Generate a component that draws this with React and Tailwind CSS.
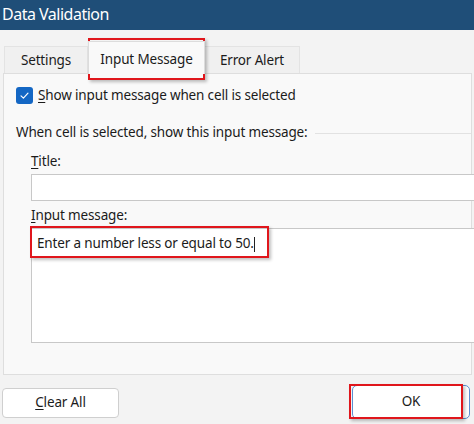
import React from "react";

const font = { fontFamily: '"Noto Sans", "Open Sans", sans-serif' };

function U({ children }) {
  return <span className="underline underline-offset-2 decoration-1">{children}</span>;
}

export default function App() {
  return (
    <div
      className="relative w-[474px] h-[424px] overflow-hidden bg-[#f3f3f3] text-[#1b1b1b] text-[13.5px] leading-none tracking-[-0.15px]"
      style={font}
    >
      {/* Title bar */}
      <div className="h-[30px] bg-[#1f4e78] text-white text-[16px] tracking-[-0.5px] flex items-center pl-[2px] pb-[2px]">
        Data Validation
      </div>

      {/* Tabs */}
      <div className="h-[43px] flex items-end pl-[4px]">
        <div className="h-[27px] w-[84px] border border-b-0 border-[#e3e3e3] bg-[#f0f0f0] flex items-center justify-center pt-[2px]">
          Settings
        </div>
        <div className="h-[33px] w-[117px] border border-b-0 border-[#dcdcdc] bg-[#f9f9f9] flex items-center justify-center -mb-px relative z-10 pt-[4px]">
          Input Message
        </div>
        <div className="h-[27px] w-[95px] border border-b-0 border-l-0 border-[#e3e3e3] bg-[#f0f0f0] flex items-center justify-center pt-[2px]">
          Error Alert
        </div>
      </div>

      {/* Panel */}
      <div className="ml-[3px] w-[469px] h-[302px] border border-[#dedede] bg-[#f9f9f9] pl-[12px] pt-[13px]">
        <div className="flex items-center h-[17px]">
          <div className="w-[17px] h-[17px] rounded-[3px] bg-[#1467c4] flex items-center justify-center">
            <svg width="11" height="11" viewBox="0 0 12 12" fill="none">
              <path d="M2.2 6.4 L4.8 8.8 L9.8 3.4" stroke="white" strokeWidth="1.3" strokeLinecap="round" strokeLinejoin="round" />
            </svg>
          </div>
          <span className="ml-[5px]">
            <U>S</U>how input message when cell is selected
          </span>
        </div>

        <div className="flex items-center h-[18px] mt-[20px]">
          <span>When cell is selected, show this input message:</span>
          <div className="flex-1 h-px bg-[#e2e2e2] ml-[7px]"></div>
        </div>

        <div className="pl-[15px]">
          <div className="h-[18px] flex items-center mt-[11px]">
            <span>
              <U>T</U>itle:
            </span>
          </div>
          <div className="mt-[3px] h-[27px] w-[460px] bg-white border border-[#c8c8c8]"></div>

          <div className="h-[18px] flex items-center mt-[6px]">
            <span>
              <U>I</U>nput message:
            </span>
          </div>
          <div className="mt-[3px] h-[115px] w-[460px] bg-white border border-[#c8c8c8] pl-[5px] pt-[7px]">
            <div className="flex items-center h-[16px]">
              Enter a number less or equal to 50.
              <span className="inline-block w-px h-[15px] bg-[#222]"></span>
            </div>
          </div>
        </div>
      </div>

      {/* Footer */}
      <div className="flex justify-between items-start pl-[2px] pt-[13px]">
        <div className="w-[117px] h-[30px] bg-white border border-[#cfcfcf] rounded-[4px] flex items-center justify-center">
          <span>
            <U>C</U>lear All
          </span>
        </div>
        <div className="w-[118px] h-[34px] bg-white border border-[#5b8fd1] rounded-[5px] flex items-center justify-center mr-[4px] -mt-[3px]">
          OK
        </div>
      </div>

      {/* Red annotation boxes */}
      <div className="absolute left-[88px] top-[38px] w-[117px] h-[42px] border-2 border-[#e0161c] shadow-[2px_2px_3px_rgba(0,0,0,0.25)]"></div>
      <div className="absolute left-[30px] top-[226px] w-[239px] h-[32px] border-2 border-[#e0161c] shadow-[2px_2px_3px_rgba(0,0,0,0.25)]"></div>
      <div className="absolute left-[349px] top-[384px] w-[114px] h-[35px] border-2 border-[#e0161c] shadow-[2px_2px_3px_rgba(0,0,0,0.25)]"></div>
    </div>
  );
}
